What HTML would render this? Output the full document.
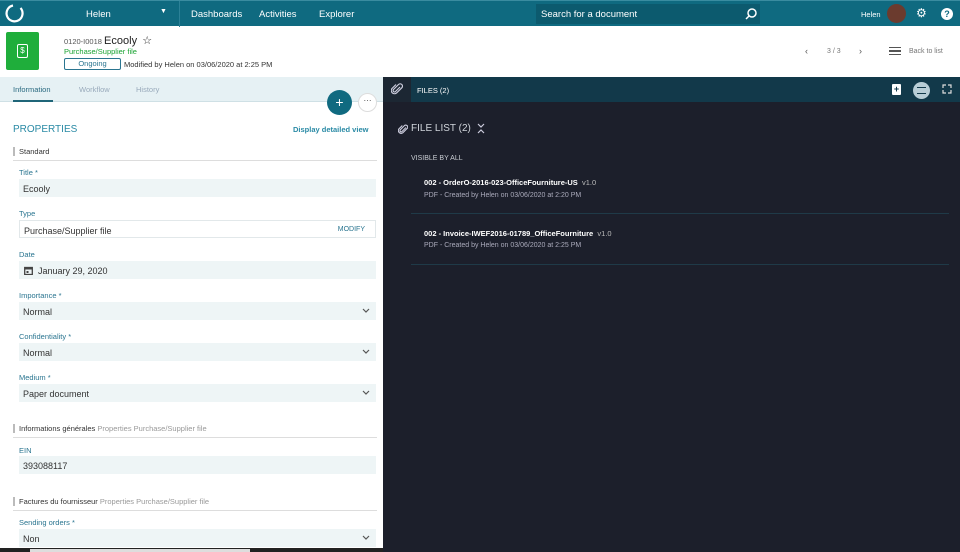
<!DOCTYPE html>
<html><head><meta charset="utf-8"><style>
*{box-sizing:border-box;margin:0;padding:0}
body{width:960px;height:552px;overflow:hidden;font-family:"Liberation Sans","DejaVu Sans",sans-serif;background:#fff;position:relative;font-size:9px;color:#333}
.abs{position:absolute}
.nav{left:0;top:0;width:960px;height:26px;background:#0f6a80;border-top:1px solid #3a8ca0}
.nav span{position:absolute;color:#fff;font-size:9.5px;top:8px}
.lbl{position:absolute;left:19px;font-size:7.5px;color:#2a7590}
.inp{position:absolute;left:19px;width:357px;height:18px;background:#eef5f6;font-size:9px;color:#333;padding:5px 0 0 4px}
.chev{position:absolute;right:6px;top:6px}
.sec{position:absolute;left:13px;width:364px;font-size:7.5px;color:#333;border-left:2px solid #bbb;padding-left:4px;height:9px;line-height:9px}
.secl{position:absolute;left:13px;width:364px;height:1px;background:#ddd}
</style></head><body>
<div class="abs nav">
 <svg class="abs" style="left:5px;top:2px" width="20" height="22" viewBox="0 0 20 22"><path d="M8 2.5 A8 8 0 1 0 15.5 5" fill="none" stroke="#fff" stroke-width="2.2"/></svg>
 <span style="left:86px">Helen</span>
 <span style="left:160px;top:7px;font-size:7px">▼</span>
 <div class="abs" style="left:179px;top:0;width:1px;height:26px;background:#2c8197"></div>
 <span style="left:191px">Dashboards</span>
 <span style="left:259px">Activities</span>
 <span style="left:319px">Explorer</span>
 <div class="abs" style="left:536px;top:3px;width:224px;height:20px;background:#0c5a6e"></div>
 <span style="left:541px">Search for a document</span>
 <svg class="abs" style="left:745px;top:7px" width="12" height="12"><circle cx="7" cy="5" r="4" fill="none" stroke="#fff" stroke-width="1.5"/><line x1="4" y1="8" x2="1" y2="11" stroke="#fff" stroke-width="1.5"/></svg>
 <span style="left:861px;font-size:7.5px;top:9px">Helen</span>
 <div class="abs" style="left:887px;top:3px;width:19px;height:19px;border-radius:50%;background:#6b3b2e"></div>
 <span style="left:916px;top:5px;font-size:12px">⚙</span>
 <div class="abs" style="left:941px;top:7px;width:12px;height:12px;border-radius:50%;background:#fff;color:#0f6a80;font-size:9px;font-weight:bold;text-align:center;line-height:12px">?</div>
</div>
<div class="abs" style="left:6px;top:32px;width:33px;height:38px;background:#1fae3b;border-radius:2px"><div class="abs" style="left:11px;top:12px;width:11px;height:14px;border:1.5px solid #fff;border-radius:2px;color:#fff;font-size:8px;text-align:center;line-height:11px">$</div></div>
<div class="abs" style="left:64px;top:34px;font-size:7.5px;color:#555">0120-I0018 <span style="font-size:11px;color:#222">Ecooly</span> <span style="font-size:11px;color:#222">&nbsp;☆</span></div>
<div class="abs" style="left:64px;top:47px;font-size:7.5px;color:#1aa332">Purchase/Supplier file</div>
<div class="abs" style="left:64px;top:58px;width:57px;height:12px;border:1px solid #2a7590;border-radius:2px;font-size:7.5px;color:#2a7590;text-align:center;line-height:10px">Ongoing</div>
<div class="abs" style="left:124px;top:60px;font-size:7.5px;color:#333">Modified by Helen on 03/06/2020 at 2:25 PM</div>
<div class="abs" style="left:805px;top:46px;font-size:9px;color:#555">‹</div>
<div class="abs" style="left:827px;top:48px;font-size:7px;color:#777">3 / 3</div>
<div class="abs" style="left:859px;top:46px;font-size:9px;color:#555">›</div>
<div class="abs" style="left:889px;top:47px;width:12px;height:8px;border-top:1.5px solid #555;border-bottom:1.5px solid #555"><div style="margin-top:2px;height:1.5px;background:#555"></div></div>
<div class="abs" style="left:909px;top:48px;font-size:7px;color:#777">Back to list</div>
<div class="abs" style="left:0;top:77px;width:383px;height:25px;background:#e6f1f4;border-bottom:1px solid #cfe0e5"></div>
<div class="abs" style="left:13px;top:85px;font-size:7.5px;color:#2a6a80">Information</div>
<div class="abs" style="left:13px;top:100px;width:40px;height:2px;background:#1f6578"></div>
<div class="abs" style="left:79px;top:85px;font-size:7.5px;color:#9ab">Workflow</div>
<div class="abs" style="left:136px;top:85px;font-size:7.5px;color:#9ab">History</div>
<div class="abs" style="left:327px;top:90px;width:25px;height:25px;border-radius:50%;background:#106a80;color:#fff;text-align:center;font-size:14px;line-height:24px">+</div>
<div class="abs" style="left:358px;top:93px;width:19px;height:19px;border-radius:50%;background:#fff;border:1px solid #ddd;text-align:center;font-size:8px;line-height:14px;color:#333">···</div>
<div class="abs" style="left:13px;top:124px;font-size:10px;color:#2a8aa5">PROPERTIES</div>
<div class="abs" style="left:293px;top:125px;font-size:7.5px;color:#2a8aa5;font-weight:bold">Display detailed view</div>
<div class="sec" style="top:147px">Standard</div><div class="secl" style="top:160px"></div>
<div class="lbl" style="top:168px">Title *</div><div class="inp" style="top:179px">Ecooly</div>
<div class="lbl" style="top:209px">Type</div><div class="inp" style="top:220px;background:#fff;border:1px solid #e2e8ea">Purchase/Supplier file<span class="abs" style="right:10px;top:5px;font-size:7px;color:#2a7590">MODIFY</span></div>
<div class="lbl" style="top:250px">Date</div><div class="inp" style="top:261px;padding-left:5px"><svg width="9" height="9" style="vertical-align:-1px"><rect x="0.7" y="1.5" width="7.6" height="7" fill="none" stroke="#444" stroke-width="1.3"/><rect x="0.7" y="1.5" width="7.6" height="2" fill="#444"/><rect x="2.5" y="5" width="2" height="2" fill="#444"/></svg>&nbsp; January 29, 2020</div>
<div class="lbl" style="top:291px">Importance *</div><div class="inp" style="top:302px">Normal<svg class="chev" width="8" height="6"><path d="M1 1 L4 4 L7 1" fill="none" stroke="#555" stroke-width="1.2"/></svg></div>
<div class="lbl" style="top:332px">Confidentiality *</div><div class="inp" style="top:343px">Normal<svg class="chev" width="8" height="6"><path d="M1 1 L4 4 L7 1" fill="none" stroke="#555" stroke-width="1.2"/></svg></div>
<div class="lbl" style="top:373px">Medium *</div><div class="inp" style="top:384px">Paper document<svg class="chev" width="8" height="6"><path d="M1 1 L4 4 L7 1" fill="none" stroke="#555" stroke-width="1.2"/></svg></div>
<div class="sec" style="top:424px">Informations générales <span style="color:#999">Properties Purchase/Supplier file</span></div><div class="secl" style="top:437px"></div>
<div class="lbl" style="top:446px">EIN</div><div class="inp" style="top:456px">393088117</div>
<div class="sec" style="top:497px">Factures du fournisseur <span style="color:#999">Properties Purchase/Supplier file</span></div><div class="secl" style="top:510px"></div>
<div class="lbl" style="top:518px">Sending orders *</div><div class="inp" style="top:529px">Non<svg class="chev" width="8" height="6"><path d="M1 1 L4 4 L7 1" fill="none" stroke="#555" stroke-width="1.2"/></svg></div>
<div class="abs" style="left:0;top:548px;width:960px;height:4px;background:#222"></div>
<div class="abs" style="left:30px;top:549px;width:220px;height:3px;background:#ddd"></div>
<div class="abs" style="left:383px;top:77px;width:577px;height:475px;background:#1c1f2b"></div>
<div class="abs" style="left:383px;top:77px;width:577px;height:25px;background:#12394a"></div>
<div class="abs" style="left:383px;top:77px;width:28px;height:25px;background:#1c2733"></div>
<svg class="abs" style="left:391px;top:83px" width="12" height="13"><path d="M9 4 L4.5 8.5 A1.3 1.3 0 0 1 2.5 6.5 L7.5 1.5 A2.3 2.3 0 0 1 10.8 4.8 L5.5 10 A3.2 3.2 0 0 1 1 5.5 L5 1.5" fill="none" stroke="#ccd" stroke-width="1.2"/></svg>
<div class="abs" style="left:417px;top:86px;font-size:7.5px;color:#fff">FILES (2)</div>
<div class="abs" style="left:892px;top:84px;width:9px;height:11px;background:#fff;border-radius:1px;color:#12394a;font-size:9px;text-align:center;line-height:11px;font-weight:bold">+</div>
<div class="abs" style="left:913px;top:82px;width:17px;height:17px;border-radius:50%;background:#b8cdd6"></div>
<div class="abs" style="left:917px;top:87px;width:9px;height:7px;border-top:1.5px solid #12394a;border-bottom:1.5px solid #12394a"></div>
<svg class="abs" style="left:942px;top:84px" width="10" height="10"><path d="M1 4 V1 H4 M6 1 H9 V4 M9 6 V9 H6 M4 9 H1 V6" fill="none" stroke="#ddd" stroke-width="1.2"/></svg>
<svg class="abs" style="left:398px;top:124px" width="10" height="11"><path d="M8 3.5 L4 7.5 A1.1 1.1 0 0 1 2.3 5.8 L6.5 1.5 A2 2 0 0 1 9.3 4.3 L4.8 8.8 A2.8 2.8 0 0 1 0.9 4.9 L4.3 1.5" fill="none" stroke="#ccd" stroke-width="1.1"/></svg>
<div class="abs" style="left:411px;top:123px;font-size:10px;color:#d0d4da">FILE LIST (2)</div>
<svg class="abs" style="left:477px;top:123px" width="8" height="11"><path d="M1 1 L4 4 L7 1 M1 10 L4 7 L7 10" fill="none" stroke="#ccd" stroke-width="1.2"/></svg>
<div class="abs" style="left:411px;top:155px;font-size:7px;color:#c8ccd2">VISIBLE BY ALL</div>
<div class="abs" style="left:424px;top:178px;font-size:7.5px;color:#fff;font-weight:bold">002 - OrderO-2016-023-OfficeFourniture-US <span style="font-weight:normal;color:#bbb">&nbsp;v1.0</span></div>
<div class="abs" style="left:424px;top:192px;font-size:7px;color:#aab">PDF - Created by Helen on 03/06/2020 at 2:20 PM</div>
<div class="abs" style="left:411px;top:213px;width:538px;height:1px;background:#1f3a48"></div>
<div class="abs" style="left:424px;top:229px;font-size:7.5px;color:#fff;font-weight:bold">002 - Invoice-IWEF2016-01789_OfficeFourniture <span style="font-weight:normal;color:#bbb">&nbsp;v1.0</span></div>
<div class="abs" style="left:424px;top:242px;font-size:7px;color:#aab">PDF - Created by Helen on 03/06/2020 at 2:25 PM</div>
<div class="abs" style="left:411px;top:264px;width:538px;height:1px;background:#1f3a48"></div>
</body></html>
